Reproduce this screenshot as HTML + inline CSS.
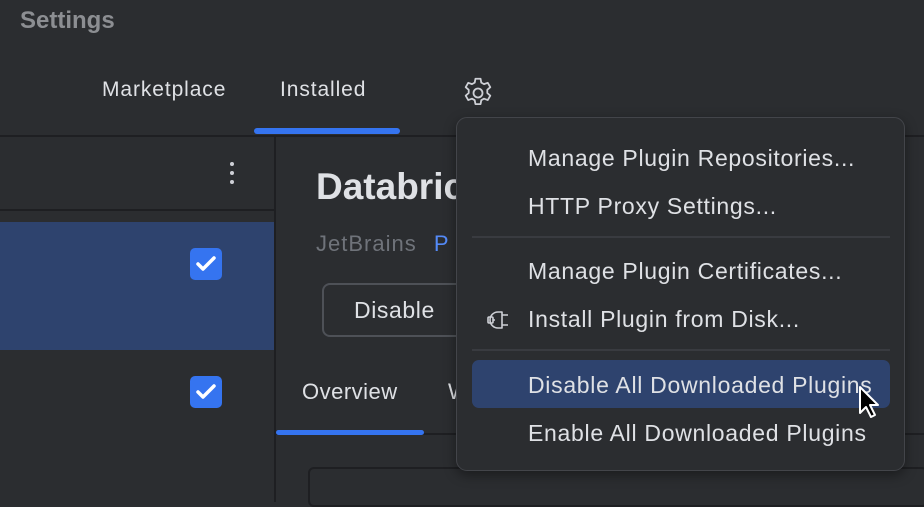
<!DOCTYPE html>
<html><head><style>
body{margin:0;width:924px;height:502px;background:#2b2d30;overflow:hidden;position:relative;font-family:"Liberation Sans",sans-serif;color:#dfe1e5}
.a{position:absolute}
.m{font-size:23px;line-height:28px;letter-spacing:0.7px}
</style></head><body>
<div class="a" style="left:20px;top:7px;font-size:24px;font-weight:bold;color:#8c8e92">Settings</div>
<div class="a" style="left:102px;top:78px;font-size:21px;letter-spacing:0.9px">Marketplace</div>
<div class="a" style="left:280px;top:78px;font-size:21px;letter-spacing:0.9px">Installed</div>
<div class="a" style="left:254px;top:128px;width:146px;height:6px;border-radius:3px;background:#3574f0"></div>
<svg class="a" style="left:460px;top:75px" width="36" height="36" viewBox="0 0 24 24" fill="none" stroke="#ced0d6" stroke-width="1.2"><path d="M10.3 2.5h3.4l.5 2.6 1.8 1 2.5-.9 1.7 2.9-2 1.8v2.1l2 1.8-1.7 2.9-2.5-.9-1.8 1-.5 2.6h-3.4l-.5-2.6-1.8-1-2.5.9-1.7-2.9 2-1.8v-2.1l-2-1.8 1.7-2.9 2.5.9 1.8-1z" stroke-linejoin="round"/><circle cx="12" cy="12" r="3"/></svg>
<div class="a" style="left:0;top:135px;width:924px;height:2px;background:#1e1f22"></div>
<div class="a" style="left:274px;top:137px;width:2px;height:365px;background:#1e1f22"></div>
<div class="a" style="left:0;top:209px;width:274px;height:2px;background:#1e1f22"></div>
<div class="a" style="left:230px;top:162px;width:4px;height:4px;border-radius:2px;background:#ced0d6;box-shadow:0 9px 0 #ced0d6,0 18px 0 #ced0d6"></div>
<div class="a" style="left:0;top:222px;width:274px;height:128px;background:#2e436e"></div>
<div class="a" style="left:190px;top:248px;width:32px;height:32px;border-radius:5px;background:#3574f0"></div>
<div class="a" style="left:190px;top:376px;width:32px;height:32px;border-radius:5px;background:#3574f0"></div>
<svg class="a" style="left:190px;top:248px" width="32" height="32"><path d="M8 16l5 5 11-11" stroke="#fff" stroke-width="3.5" fill="none" stroke-linecap="round" stroke-linejoin="round"/></svg>
<svg class="a" style="left:190px;top:376px" width="32" height="32"><path d="M8 16l5 5 11-11" stroke="#fff" stroke-width="3.5" fill="none" stroke-linecap="round" stroke-linejoin="round"/></svg>
<div class="a" style="left:316px;top:166px;font-size:37px;font-weight:bold;color:#dfe1e5">Databricks</div>
<div class="a" style="left:316px;top:231px;font-size:22px;letter-spacing:1px;color:#6f737a">JetBrains <span style="color:#548af7;margin-left:10px">P</span></div>
<div class="a" style="left:322px;top:283px;width:160px;height:54px;border:2px solid #4e5157;border-radius:8px;box-sizing:border-box"></div>
<div class="a" style="left:354px;top:297px;font-size:23px;letter-spacing:0.6px">Disable</div>
<div class="a" style="left:302px;top:379px;font-size:22px;letter-spacing:0.5px">Overview</div>
<div class="a" style="left:448px;top:379px;font-size:22px">W</div>
<div class="a" style="left:276px;top:433px;width:648px;height:2px;background:#1e1f22"></div>
<div class="a" style="left:276px;top:430px;width:148px;height:5px;border-radius:3px;background:#3574f0"></div>
<div class="a" style="left:308px;top:467px;width:620px;height:40px;border:2px solid #1e1f22;border-radius:6px;box-sizing:border-box"></div>
<div class="a" style="left:456px;top:117px;width:449px;height:354px;background:#2b2d30;border:1.5px solid #43454a;border-radius:11px;box-sizing:border-box;box-shadow:0 4px 12px rgba(0,0,0,.4)"></div>
<div class="a" style="left:472px;top:236px;width:418px;height:2px;background:#393b40"></div>
<div class="a" style="left:472px;top:349px;width:418px;height:2px;background:#393b40"></div>
<div class="a" style="left:472px;top:360px;width:418px;height:48px;border-radius:7px;background:#2e436e"></div>
<div class="a m" style="left:528px;top:144px">Manage Plugin Repositories...</div>
<div class="a m" style="left:528px;top:192px">HTTP Proxy Settings...</div>
<div class="a m" style="left:528px;top:257px">Manage Plugin Certificates...</div>
<div class="a m" style="left:528px;top:305px">Install Plugin from Disk...</div>
<div class="a m" style="left:528px;top:371px">Disable All Downloaded Plugins</div>
<div class="a m" style="left:528px;top:419px">Enable All Downloaded Plugins</div>
<svg class="a" style="left:486px;top:307px" width="36" height="26" fill="none" stroke="#ced0d6" stroke-width="1.6" stroke-linejoin="round"><rect x="2" y="10" width="5" height="6" rx="1"/><path d="M7 13h2M12 5h4v16h-4a8 8 0 0 1 0-16zM16 8h6M16 18h6"/></svg>
<svg class="a" style="left:858px;top:385px" width="24" height="40"><path d="M2 2v26l6-6 5 10 4-2-5-10h8z" fill="#000" stroke="#fff" stroke-width="2" stroke-linejoin="round"/></svg>
</body></html>
